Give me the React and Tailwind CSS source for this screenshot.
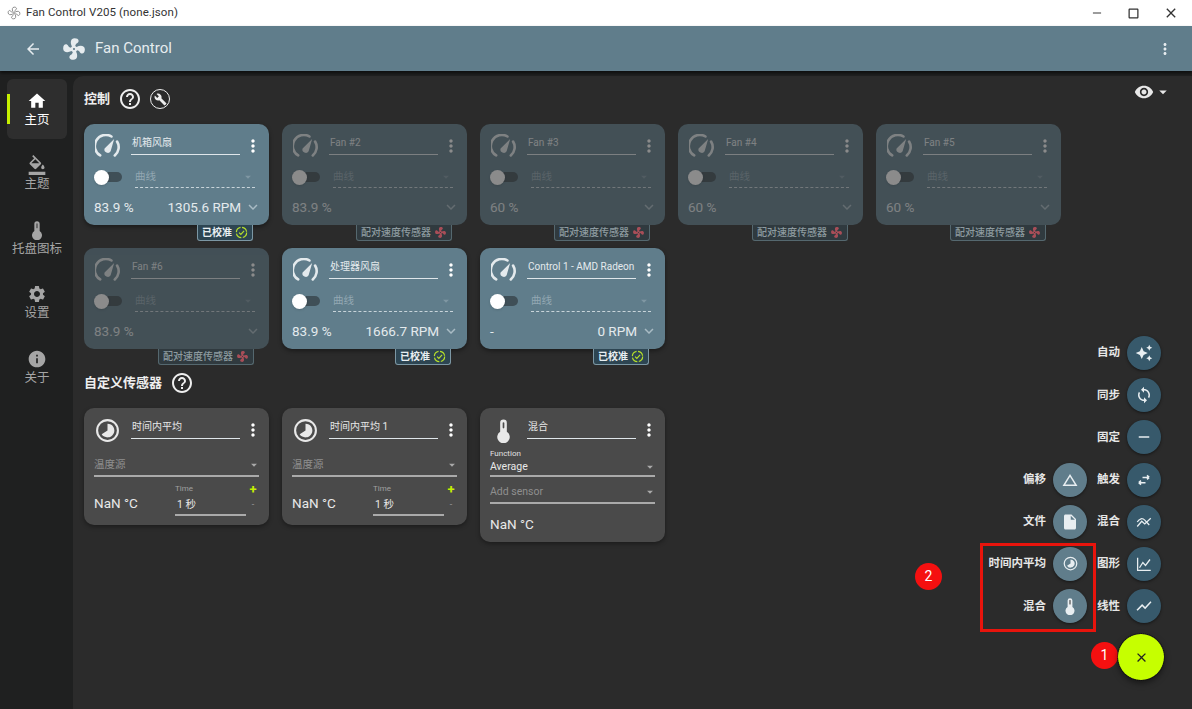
import {
    MdArrowBack,
    MdArrowDropDown,
    MdAutoAwesome,
    MdBuild,
    MdClose,
    MdFormatColorFill,
    MdHelpOutline,
    MdHome,
    MdInfo,
    MdInsertDriveFile,
    MdKeyboardArrowDown,
    MdMoreVert,
    MdOutlineChangeHistory,
    MdRemove,
    MdSettings,
    MdShowChart,
    MdSync,
    MdCropSquare,
} from "react-icons/md";

const FAN_PATH =
    "M12,11A1,1 0 0,0 11,12A1,1 0 0,0 12,13A1,1 0 0,0 13,12A1,1 0 0,0 12,11M12.5,2C17,2 17.11,5.57 14.75,6.75C13.76,7.24 13.32,8.29 13.13,9.22C13.61,9.42 14.03,9.73 14.35,10.13C18.05,8.13 22.03,8.92 22.03,12.5C22.03,17 18.46,17.1 17.28,14.73C16.78,13.74 15.72,13.3 14.79,13.11C14.59,13.59 14.28,14 13.88,14.34C15.87,18.03 15.08,22 11.5,22C7,22 6.91,18.42 9.27,17.24C10.25,16.75 10.69,15.71 10.89,14.79C10.4,14.59 9.97,14.27 9.65,13.87C5.96,15.85 2,15.07 2,11.5C2,7 5.56,6.89 6.74,9.26C7.24,10.25 8.29,10.68 9.22,10.87C9.41,10.39 9.73,9.97 10.14,9.65C8.15,5.96 8.94,2 12.5,2Z";

function FanIcon({ className, outline }) {
    return (
        <svg viewBox="0 0 24 24" className={className}>
            <path
                d={FAN_PATH}
                fill={outline ? "none" : "currentColor"}
                fillRule="evenodd"
                stroke={outline ? "currentColor" : "none"}
                strokeWidth="1.4"
            />
        </svg>
    );
}

function GaugeIcon({ className }) {
    return (
        <svg viewBox="0 0 24 24" className={className} fill="none">
            <path
                d="M5 20.6A10.4 10.4 0 0 1 15.8 2.4M21.2 7.2A10.4 10.4 0 0 1 19 20.6"
                stroke="currentColor"
                strokeWidth="2.5"
                strokeLinecap="round"
            />
            <path d="M18.4 4.8L15 16.6A3.2 3.2 0 0 1 9.2 14Z" fill="currentColor" />
        </svg>
    );
}

function TimeAvgIcon({ className }) {
    return (
        <svg viewBox="0 0 24 24" className={className} fill="none">
            <circle cx="12" cy="12" r="10" stroke="currentColor" strokeWidth="2" />
            <path d="M12 5.4A6.6 6.6 0 1 1 6.4 15.5L12 12Z" fill="currentColor" />
        </svg>
    );
}

function ThermoIcon({ className }) {
    return (
        <svg viewBox="0 0 24 24" className={className}>
            <path
                d="M12 1.5A3.2 3.2 0 0 1 15.2 4.7V13.2A6 6 0 1 1 8.8 13.2V4.7A3.2 3.2 0 0 1 12 1.5Z"
                fill="currentColor"
            />
            <rect x="11.2" y="4" width="1.6" height="6" rx="0.8" fill="#4a4a4a" />
        </svg>
    );
}

function CheckRing() {
    return (
        <svg viewBox="0 0 24 24" className="h-[13px] w-[13px] text-[#b6e02a]" fill="none">
            <circle cx="12" cy="12" r="9.5" stroke="currentColor" strokeWidth="2.2" strokeDasharray="12 2.9" />
            <path d="M7.5 12.2L10.8 15.5L16.8 9" stroke="currentColor" strokeWidth="2.2" />
        </svg>
    );
}

const NAV_ITEMS = [
    { label: "主页", icon: MdHome, active: true },
    { label: "主题", icon: MdFormatColorFill },
    { label: "托盘图标", icon: ThermoIcon },
    { label: "设置", icon: MdSettings },
    { label: "关于", icon: MdInfo },
];

function TitleBar() {
    return (
        <div className="flex h-[26px] shrink-0 items-center bg-white pl-[7px] text-[#333]">
            <FanIcon outline className="h-[14px] w-[14px] text-[#777]" />
            <span className="ml-[5px] text-[11.5px] tracking-[0.1px]">Fan Control V205 (none.json)</span>
            <div className="ml-auto flex items-center">
                <MdRemove className="mr-[22px] h-[14px] w-[14px] text-[#555]" />
                <MdCropSquare className="mr-[22px] h-[15px] w-[15px] text-[#333]" />
                <MdClose className="mr-[13px] h-[16px] w-[16px] text-[#333]" />
            </div>
        </div>
    );
}

function AppBar() {
    return (
        <div className="z-10 flex h-[45px] shrink-0 items-center bg-[#607d8b] pl-[24px] pr-[18px] text-[#e6ecef] shadow-[0_2px_3px_rgba(0,0,0,0.6)]">
            <MdArrowBack className="h-[18px] w-[18px]" />
            <FanIcon className="ml-[19px] h-[26px] w-[26px]" />
            <span className="ml-[8px] text-[15px]">Fan Control</span>
            <MdMoreVert className="ml-auto h-[18px] w-[18px]" />
        </div>
    );
}

function Sidebar() {
    return (
        <nav className="flex w-[73px] shrink-0 flex-col pl-[7px] pt-[8px]">
            {NAV_ITEMS.map((item) => {
                const Icon = item.icon;
                return (
                    <div
                        key={item.label}
                        className={
                            item.active
                                ? "relative mb-[4.6px] flex h-[60px] w-[60px] flex-col items-center justify-center rounded-[6px] bg-[#2e2e2e] text-white"
                                : "relative mb-[4.6px] flex h-[60px] w-[60px] flex-col items-center justify-center text-[#a5a5a5]"
                        }
                    >
                        {item.active && (
                            <span className="absolute left-0 top-[15px] h-[30px] w-[3px] bg-[#c6f000]" />
                        )}
                        <Icon className="h-[20px] w-[20px]" />
                        <span className="mt-[1px] whitespace-nowrap text-[12.5px] leading-[16px]">{item.label}</span>
                    </div>
                );
            })}
        </nav>
    );
}

function SectionTitle({ children, tool }) {
    return (
        <div className="flex h-[20px] items-center text-[#eee]">
            <h2 className="text-[13px] font-bold">{children}</h2>
            <MdHelpOutline className="ml-[8px] h-[24px] w-[24px]" />
            {tool && (
                <span className="ml-[8px] flex h-[20px] w-[20px] items-center justify-center rounded-full border-[1.5px] border-[#eee]">
                    <MdBuild className="h-[13px] w-[13px]" />
                </span>
            )}
        </div>
    );
}

function NameField({ name }) {
    return (
        <div className="ml-[11px] mt-[2px] w-[109px] shrink-0 border-b-[1px] border-[#dfe6ea] pb-[4px] pl-[1px] text-[10px] leading-[14px] whitespace-nowrap">
            {name}
        </div>
    );
}

function FanCard({ name, percent = "83.9 %", rpm, badge, disabled }) {
    return (
        <div className="relative h-[101px]">
            <div
                className={
                    disabled
                        ? "flex h-full flex-col rounded-[10px] bg-[#607d8b] pl-[11px] pr-[6px] pt-[10px] text-[#e4eaed] opacity-45"
                        : "flex h-full flex-col rounded-[10px] bg-[#607d8b] pl-[11px] pr-[6px] pt-[10px] text-[#e4eaed] shadow-[0_2px_4px_rgba(0,0,0,0.4)]"
                }
            >
                <div className="flex items-start">
                    <GaugeIcon className="h-[25px] w-[25px] shrink-0" />
                    <NameField name={name} />
                    <MdMoreVert className="ml-[3px] mt-[2px] h-[20px] w-[20px] shrink-0 text-white" />
                </div>
                <div className="mt-[7px] flex items-center">
                    <span className="relative h-[10px] w-[27px] shrink-0 rounded-full bg-[#3f4f57]">
                        <span className="absolute left-[-1px] top-[-2.5px] h-[15px] w-[15px] rounded-full bg-white shadow" />
                    </span>
                    <div className="ml-[13px] flex h-[22px] w-[120px] items-center justify-between border-b border-dashed border-[#c8d4da] text-[10.5px] text-[#93a8b3]">
                        <span>曲线</span>
                        <MdArrowDropDown className="h-[14px] w-[14px] text-[#7f97a3]" />
                    </div>
                </div>
                <div className="ml-[-1px] mt-[10px] flex items-center text-[13.5px] leading-[18px]">
                    <span>{percent}</span>
                    <span className="ml-auto">{rpm}</span>
                    <MdKeyboardArrowDown className="ml-[3px] mr-[1px] h-[18px] w-[18px] text-[#a9bbc4]" />
                </div>
            </div>
            {badge && (
                <div
                    className={
                        disabled
                            ? "absolute right-[15px] top-full flex h-[16px] items-center gap-[3px] rounded-b-[3px] border border-t-0 border-[#55686f] bg-[#303a3f] px-[4px] text-[10px] font-medium text-[#8d9a9f]"
                            : "absolute right-[16px] top-full flex h-[16px] items-center gap-[3px] rounded-b-[3px] border border-t-0 border-[#7c97a4] bg-[#2d4552] px-[4px] text-[10px] font-bold text-[#e8eef1]"
                    }
                >
                    <span>{badge}</span>
                    {disabled ? <FanIcon className="h-[13px] w-[13px] text-[#a84e58]" /> : <CheckRing />}
                </div>
            )}
        </div>
    );
}

function SensorHeader({ icon: Icon, name }) {
    return (
        <div className="ml-[1px] flex items-start text-[#e8e8e8]">
            <Icon className="h-[25px] w-[25px] shrink-0" />
            <NameField name={name} />
            <MdMoreVert className="ml-[3px] mt-[2px] h-[20px] w-[20px] shrink-0 text-white" />
        </div>
    );
}

function SensorSelect({ label, muted }) {
    return (
        <div
            className={
                muted
                    ? "flex h-[22px] items-center justify-between border-b-2 border-[#aaa] text-[10.5px] text-[#8f8f8f]"
                    : "flex h-[18px] items-center justify-between border-b-2 border-[#aaa] text-[10.5px] text-[#e8e8e8]"
            }
        >
            <span>{label}</span>
            <MdArrowDropDown className="mr-[-2px] h-[14px] w-[14px] text-[#aaa]" />
        </div>
    );
}

function TimeSensorCard({ name }) {
    return (
        <div className="h-[117px] rounded-[10px] bg-[#4a4a4a] px-[10px] pt-[10px] shadow-[0_2px_4px_rgba(0,0,0,0.35)]">
            <SensorHeader icon={TimeAvgIcon} name={name} />
            <div className="mt-[12px]">
                <SensorSelect label="温度源" muted />
            </div>
            <div className="mt-[6px] flex items-start text-[#e8e8e8]">
                <span className="mt-[11px] w-[81px] text-[13.5px] leading-[18px]">NaN °C</span>
                <div className="w-[71px]">
                    <div className="text-[8px] leading-[12px] text-[#a0a0a0]">Time</div>
                    <div className="mt-[3px] border-b-2 border-[#aaa] pb-[2px] pl-[2px] text-[10.5px] leading-[14px]">1 秒</div>
                </div>
                <div className="ml-[2px] flex w-[10px] flex-col items-center leading-none">
                    <span className="text-[13px] font-bold leading-[14px] text-[#c6f000]">+</span>
                    <span className="text-[9px] leading-[14px] text-[#999]">-</span>
                </div>
            </div>
        </div>
    );
}

function MixSensorCard() {
    return (
        <div className="h-[134px] rounded-[10px] bg-[#4a4a4a] px-[10px] pt-[10px] shadow-[0_2px_4px_rgba(0,0,0,0.35)]">
            <SensorHeader icon={ThermoIcon} name="混合" />
            <div className="mt-[6px] text-[8px] leading-[10px] text-[#e0e0e0]">Function</div>
            <SensorSelect label="Average" />
            <div className="mt-[5px]">
                <SensorSelect label="Add sensor" muted />
            </div>
            <div className="mt-[11px] text-[13.5px] leading-[18px] text-[#e8e8e8]">NaN °C</div>
        </div>
    );
}

function FabItem({ label, icon: Icon, light, small }) {
    return (
        <div className="flex h-[34px] items-center justify-end gap-[7px]">
            <span className="whitespace-nowrap text-[11.5px] font-bold text-[#e6e6e6]">{label}</span>
            <span
                className={
                    light
                        ? "flex h-[34px] w-[34px] shrink-0 items-center justify-center rounded-full bg-[#607d8b] text-[#e8eef1] shadow-[0_1px_3px_rgba(0,0,0,0.5)]"
                        : "flex h-[34px] w-[34px] shrink-0 items-center justify-center rounded-full bg-[#37596b] text-[#e8eef1] shadow-[0_1px_3px_rgba(0,0,0,0.5)]"
                }
            >
                <Icon className={small ? "h-[15px] w-[15px]" : "h-[18px] w-[18px]"} />
            </span>
        </div>
    );
}

function SwapIcon({ className }) {
    return (
        <svg viewBox="0 0 24 24" className={className} fill="none" stroke="currentColor" strokeWidth="2">
            <path d="M5 15.5H14M5 15.5L8 12.8M5 15.5L8 18.2" />
            <path d="M10 8.5H19M19 8.5L16 5.8M19 8.5L16 11.2" />
        </svg>
    );
}

function MixIcon({ className }) {
    return (
        <svg viewBox="0 0 24 24" className={className} fill="none" stroke="currentColor" strokeWidth="1.7">
            <path d="M3 12C6 7 10 6.5 13 9.5L19 16" />
            <path d="M3 18L9 11L13 14.5L21 7" />
        </svg>
    );
}

function GraphIcon({ className }) {
    return (
        <svg viewBox="0 0 24 24" className={className} fill="none" stroke="currentColor" strokeWidth="1.7">
            <path d="M3.5 3.5V20.5H21" />
            <path d="M6 17L10.5 10L14 14L20 6" />
        </svg>
    );
}

function FabMenu() {
    return (
        <div className="absolute right-[31px] top-[336px] flex items-end gap-[10px]">
            <div className="flex flex-col gap-[8.2px]">
                <FabItem label="偏移" icon={MdOutlineChangeHistory} light />
                <FabItem label="文件" icon={MdInsertDriveFile} light />
                <FabItem label="时间内平均" icon={TimeAvgIcon} light small />
                <FabItem label="混合" icon={ThermoIcon} light />
            </div>
            <div className="flex w-[64px] flex-col gap-[8.2px]">
                <FabItem label="自动" icon={MdAutoAwesome} />
                <FabItem label="同步" icon={MdSync} />
                <FabItem label="固定" icon={MdRemove} />
                <FabItem label="触发" icon={SwapIcon} />
                <FabItem label="混合" icon={MixIcon} />
                <FabItem label="图形" icon={GraphIcon} />
                <FabItem label="线性" icon={MdShowChart} />
            </div>
        </div>
    );
}

function Annotations() {
    return (
        <>
            <div className="absolute left-[980px] top-[543px] h-[89px] w-[116px] border-[3px] border-[#e8140c]" />
            <span className="absolute left-[915px] top-[563px] flex h-[27px] w-[27px] items-center justify-center rounded-full bg-[#f51010] text-[14px] text-white">
                2
            </span>
            <span className="absolute left-[1091px] top-[642px] flex h-[27px] w-[27px] items-center justify-center rounded-full bg-[#f51010] text-[14px] text-white">
                1
            </span>
            <button className="absolute left-[1118px] top-[634px] flex h-[46px] w-[46px] items-center justify-center rounded-full bg-[#c6ff00] text-[#222] shadow-[0_3px_6px_rgba(0,0,0,0.5)] outline-1 outline-dotted outline-[#111]">
                <MdClose className="h-[15px] w-[15px]" />
            </button>
        </>
    );
}

function ViewToggle() {
    return (
        <div className="absolute right-[20px] top-[6px] flex items-center text-[#e8e8e8]">
            <svg viewBox="0 0 24 24" className="h-[20px] w-[20px]" fill="currentColor">
                <path d="M12 4.5C7 4.5 2.73 7.61 1 12c1.73 4.39 6 7.5 11 7.5s9.27-3.11 11-7.5c-1.73-4.39-6-7.5-11-7.5zM12 17c-2.76 0-5-2.24-5-5s2.24-5 5-5 5 2.24 5 5-2.24 5-5 5zm0-8c-1.66 0-3 1.34-3 3s1.34 3 3 3 3-1.34 3-3-1.34-3-3-3z" />
            </svg>
            <MdArrowDropDown className="h-[18px] w-[18px]" />
        </div>
    );
}

export default function App() {
    return (
        <div
            className="relative flex h-screen w-full flex-col overflow-hidden bg-[#1f2020]"
            style={{ fontFamily: "Roboto, 'Noto Sans CJK SC', sans-serif" }}
        >
            <TitleBar />
            <AppBar />
            <div className="flex min-h-0 flex-1">
                <Sidebar />
                <main className="relative mt-[5px] flex-1 rounded-tl-[10px] bg-[#2b2b2b] pl-[11px] pt-[13px]">
                    <ViewToggle />
                    <SectionTitle tool>控制</SectionTitle>
                    <div className="mt-[15px] grid grid-cols-[repeat(5,185px)] gap-x-[13px] gap-y-[23px]">
                        <FanCard name="机箱风扇" rpm="1305.6 RPM" badge="已校准" />
                        <FanCard name="Fan #2" badge="配对速度传感器" disabled />
                        <FanCard name="Fan #3" percent="60 %" badge="配对速度传感器" disabled />
                        <FanCard name="Fan #4" percent="60 %" badge="配对速度传感器" disabled />
                        <FanCard name="Fan #5" percent="60 %" badge="配对速度传感器" disabled />
                        <FanCard name="Fan #6" badge="配对速度传感器" disabled />
                        <FanCard name="处理器风扇" rpm="1666.7 RPM" badge="已校准" />
                        <FanCard name="Control 1 - AMD Radeon" percent="-" rpm="0 RPM" badge="已校准" />
                    </div>
                    <div className="mt-[24px]">
                        <SectionTitle>自定义传感器</SectionTitle>
                    </div>
                    <div className="mt-[15px] grid grid-cols-[repeat(3,185px)] items-start gap-x-[13px]">
                        <TimeSensorCard name="时间内平均" />
                        <TimeSensorCard name="时间内平均 1" />
                        <MixSensorCard />
                    </div>
                </main>
            </div>
            <FabMenu />
            <Annotations />
        </div>
    );
}
